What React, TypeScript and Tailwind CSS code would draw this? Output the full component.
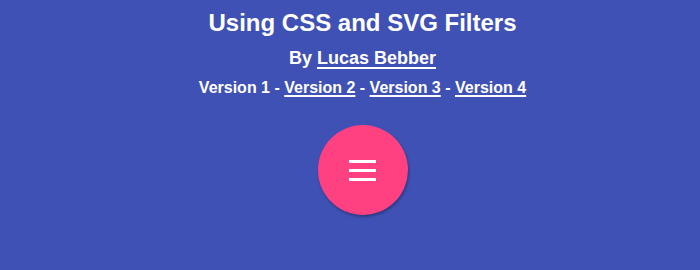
import React from 'react';

export default function App() {
  return (
    <div className="w-[700px] h-[270px] bg-[#3f51b5] pl-[25px] pt-[9px] flex flex-col items-center text-white font-bold font-['Liberation_Sans',Arial,sans-serif]">
      <h1 className="text-[24px] leading-[28px]">Using CSS and SVG Filters</h1>
      <p className="mt-[10px] text-[18px] leading-[22px]">
        By <a className="underline decoration-2 underline-offset-[3px]">Lucas Bebber</a>
      </p>
      <p className="mt-[9px] text-[16px] leading-[20px]">
        Version 1 - <a className="underline decoration-2 underline-offset-[2px]">Version 2</a> -{' '}
        <a className="underline decoration-2 underline-offset-[2px]">Version 3</a> -{' '}
        <a className="underline decoration-2 underline-offset-[2px]">Version 4</a>
      </p>
      <button className="mt-[27px] w-[90px] h-[90px] rounded-full bg-[#ff4081] shadow-[1px_2px_3px_rgba(0,0,0,0.3)] flex flex-col items-center justify-center gap-[6px]">
        <span className="block w-[27px] h-[3px] bg-white" />
        <span className="block w-[27px] h-[3px] bg-white" />
        <span className="block w-[27px] h-[3px] bg-white" />
      </button>
    </div>
  );
}
